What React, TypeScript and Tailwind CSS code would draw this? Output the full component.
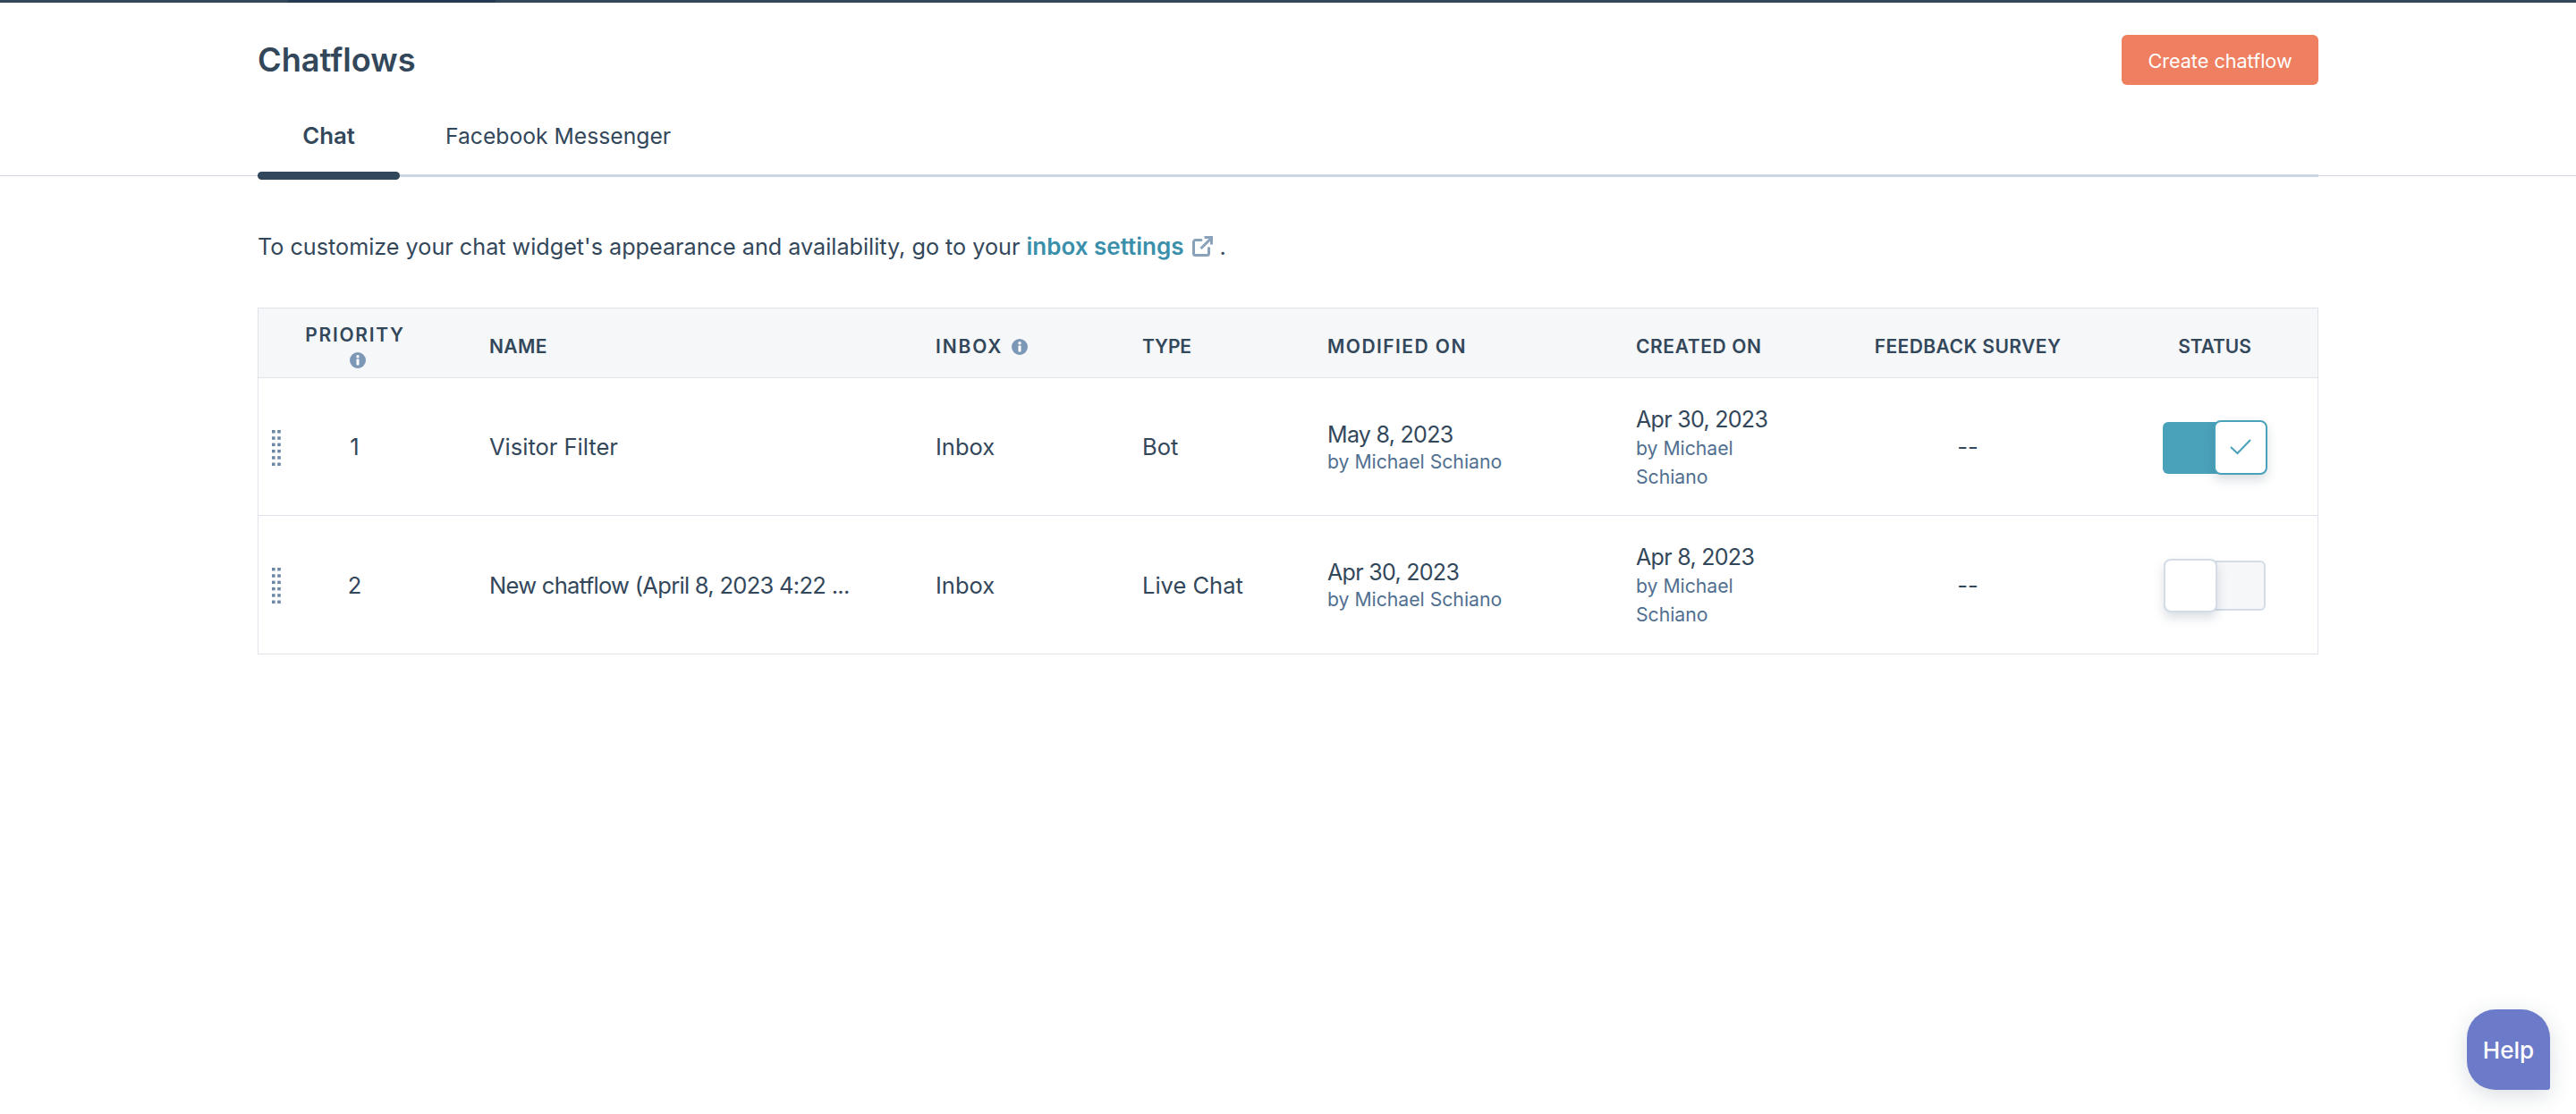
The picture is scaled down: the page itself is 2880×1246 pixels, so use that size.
import React from "react";

const sans = "font-['Inter','Noto_Sans',sans-serif]";
const gridCols = "grid grid-cols-[258px_499px_231px_207px_345px_235px_272px_255px]";

function InfoIcon() {
  return (
    <svg width="18" height="18" viewBox="0 0 18 18" className="shrink-0">
      <circle cx="9" cy="9" r="9" fill="#7c98b6" />
      <circle cx="9" cy="4.8" r="1.7" fill="#fff" />
      <rect x="7.5" y="7.6" width="3" height="6.8" rx="0.6" fill="#fff" />
    </svg>
  );
}

function ExternalIcon() {
  return (
    <svg width="24" height="24" viewBox="0 0 24 24" fill="none" stroke="#8aa1ba" strokeWidth="3" className="shrink-0">
      <path d="M11 4.6H4.5a2 2 0 0 0-2 2v13a2 2 0 0 0 2 2h13a2 2 0 0 0 2-2V13.5" strokeLinecap="round" />
      <path d="M10.5 14 22 2.6M14.5 1.6h8v8" />
    </svg>
  );
}

function DragHandle() {
  const ys = [0, 7.3, 14.6, 21.9, 29.2, 36.5];
  return (
    <svg width="10" height="40" viewBox="0 0 10 40" className="shrink-0">
      {ys.map((y) => (
        <g key={y} fill="#6c88a6">
          <rect x="0" y={y} width="3.6" height="3.5" />
          <rect x="6.2" y={y} width="3.6" height="3.5" />
        </g>
      ))}
    </svg>
  );
}

function Toggle({ on }: { on: boolean }) {
  if (on) {
    return (
      <div className="relative h-[58px] w-[116px] rounded-[6px] bg-[#4aa2ba]">
        <div className="absolute left-[57px] top-[-2px] flex h-[61px] w-[60px] items-center justify-center rounded-[8px] border-2 border-[#4aa2ba] bg-white shadow-[0_6px_12px_rgba(51,71,91,0.18)]">
          <svg width="24" height="18" viewBox="0 0 24 18" fill="none" stroke="#4aa2ba" strokeWidth="2">
            <path d="M1 9l7.5 7L23 1" />
          </svg>
        </div>
      </div>
    );
  }
  return (
    <div className="relative h-[56px] w-[114px] rounded-[6px] border-2 border-[#d3dce7] bg-[#f6f7f9]">
      <div className="absolute left-[-2px] top-[-4px] h-[60px] w-[60px] rounded-[8px] border-2 border-[#d3dce7] bg-white shadow-[0_6px_12px_rgba(51,71,91,0.18)]" />
    </div>
  );
}

function Head({ children, tracking }: { children: React.ReactNode; tracking: string }) {
  return (
    <div className={`text-[21px] font-semibold leading-[24px] text-[#33475b] ${tracking}`}>{children}</div>
  );
}

function DateCell({ date, by }: { date: string; by: string }) {
  return (
    <div className="flex flex-col">
      <span className="text-[25px] leading-[30px] tracking-[-0.7px] text-[#33475b]">{date}</span>
      <span className="text-[21.2px] leading-[30px] text-[#516f90]">{by}</span>
    </div>
  );
}

function CreatedCell({ date }: { date: string }) {
  return (
    <div className="flex w-[160px] flex-col leading-[32px]">
      <span className="text-[25px] tracking-[-0.7px] text-[#33475b]">{date}</span>
      <span className="text-[21.2px] text-[#516f90]">by Michael Schiano</span>
    </div>
  );
}

type RowData = {
  priority: string;
  name: string;
  type: string;
  modified: string;
  created: string;
  on: boolean;
};

function Row({ r, last }: { r: RowData; last?: boolean }) {
  const text = "flex items-center text-[25.5px] text-[#33475b]";
  return (
    <div className={`${gridCols} pt-[2px] ${last ? "h-[154px]" : "h-[154px] border-b border-[#e0e4ea]"}`}>
      <div className="flex items-center pl-[15px] pr-[68px]">
        <DragHandle />
        <span className="flex-1 text-center text-[25.5px] text-[#33475b]">{r.priority}</span>
      </div>
      <div className={`${text} whitespace-nowrap ${r.priority === "2" ? "tracking-[-0.7px]" : ""}`}>{r.name}</div>
      <div className={text}>Inbox</div>
      <div className={text}>{r.type}</div>
      <div className="flex items-center">
        <DateCell date={r.modified} by="by Michael Schiano" />
      </div>
      <div className="flex items-center">
        <CreatedCell date={r.created} />
      </div>
      <div className="flex items-center justify-center text-[25.5px] text-[#33475b]">--</div>
      <div className="flex items-center justify-center pl-[25px]">
        <Toggle on={r.on} />
      </div>
    </div>
  );
}

const rows: RowData[] = [
  { priority: "1", name: "Visitor Filter", type: "Bot", modified: "May 8, 2023", created: "Apr 30, 2023", on: true },
  { priority: "2", name: "New chatflow (April 8, 2023 4:22 ...", type: "Live Chat", modified: "Apr 30, 2023", created: "Apr 8, 2023", on: false },
];

export default function App() {
  return (
    <div className={`relative min-h-screen bg-white ${sans}`}>
      <div className="flex h-[3px] bg-[#33475b]">
        <div className="ml-[322px] w-[232px] bg-[#233a51]" />
      </div>

      <div className="flex items-center justify-between px-[288px] pt-[36px]">
        <h1 className="text-[36.2px] font-semibold leading-[56px] text-[#33475b]">Chatflows</h1>
        <button className="flex h-[56px] w-[220px] items-center justify-center rounded-[6px] bg-[#ee7f60] pt-[2px] text-[21.6px] text-white">
          Create chatflow
        </button>
      </div>

      <div className="relative mt-[15px]">
        <div className="absolute bottom-[1px] left-0 right-0 h-[1.5px] bg-[#d4d9e1]" />
        <div className="relative mx-[288px] flex h-[88px] items-center border-b-[3px] border-[#cbd6e2]">
          <div className="relative flex h-full w-[159px] items-center justify-center">
            <span className="text-[25.8px] font-semibold text-[#33475b]">Chat</span>
            <span className="absolute bottom-[-6px] left-0 right-0 h-[9px] rounded-[5px] bg-[#33475b]" />
          </div>
          <span className="ml-[51px] text-[24.7px] text-[#33475b]">Facebook Messenger</span>
        </div>
      </div>

      <p className="mx-[288px] mt-[62px] flex items-center text-[25.2px] leading-[32px] text-[#33475b]">
        <span className="whitespace-pre">To customize your chat widget's appearance and availability, go to your </span>
        <a className="text-[26px] font-semibold text-[#3a8fab]">inbox settings</a>
        <span className="ml-[8px]"><ExternalIcon /></span>
        <span className="ml-[8px]">.</span>
      </p>

      <div className="mx-[288px] mt-[52px] w-[2304px] border border-[#e0e4ea]">
        <div className={`${gridCols} h-[78px] border-b border-[#e0e4ea] bg-[#f6f7f9]`}>
          <div className="flex flex-col items-center pr-[42px] pt-[18px]">
            <Head tracking="tracking-[1.7px]">PRIORITY</Head>
            <span className="mt-[7px] ml-[6px]"><InfoIcon /></span>
          </div>
          <div className="flex items-center pt-[9px]"><Head tracking="tracking-[0.4px]">NAME</Head></div>
          <div className="flex items-center gap-[10px] pt-[9px]"><Head tracking="tracking-[1.9px]">INBOX</Head><InfoIcon /></div>
          <div className="flex items-center pt-[9px]"><Head tracking="tracking-[-0.1px]">TYPE</Head></div>
          <div className="flex items-center pt-[9px]"><Head tracking="tracking-[1.45px]">MODIFIED ON</Head></div>
          <div className="flex items-center pt-[9px]"><Head tracking="tracking-[0.6px]">CREATED ON</Head></div>
          <div className="flex items-center justify-center pt-[9px]"><Head tracking="tracking-[0.43px]">FEEDBACK SURVEY</Head></div>
          <div className="flex items-center justify-center pl-[25px] pt-[9px]"><Head tracking="tracking-[-0.1px]">STATUS</Head></div>
        </div>
        {rows.map((r, i) => (
          <Row key={r.priority} r={r} last={i === rows.length - 1} />
        ))}
      </div>

      <div className="absolute bottom-[27px] right-[29px] flex h-[90px] w-[93px] items-center justify-center rounded-[32px] rounded-br-[3px] bg-[#6c7bc9] text-[26px] font-medium text-white shadow-[0_6px_24px_rgba(51,71,91,0.18)]">
        Help
      </div>
    </div>
  );
}
